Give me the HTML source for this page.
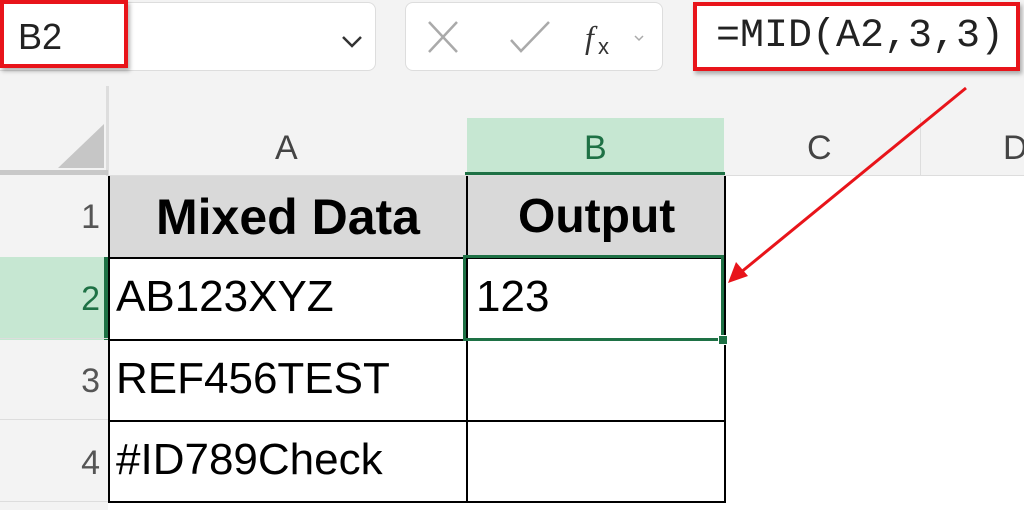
<!DOCTYPE html><html><head><style>
body{margin:0;width:1024px;height:510px;background:#fff;position:relative;overflow:hidden;font-family:"Liberation Sans",sans-serif}
div{position:absolute;box-sizing:border-box}
.t{font-size:44px;color:#000;line-height:1}
.rn{font-size:34px;color:#555;width:100px;text-align:right;left:0}
</style></head><body>
<div style="left:0;top:0;width:1024px;height:176px;background:#f3f3f3"></div>
<div style="left:0;top:176px;width:108px;height:334px;background:#f3f3f3"></div>
<div style="left:-10px;top:2px;width:386px;height:69px;background:#fff;border:1px solid #ddd;border-radius:8px"></div>
<div style="left:0;top:0;width:128px;height:68px;border:4px solid #e8141a;box-shadow:2px 3px 4px rgba(0,0,0,.3)"></div>
<div style="left:18px;top:16px;font-size:36px;color:#222">B2</div>
<svg style="position:absolute;left:340px;top:34px" width="24" height="16"><path d="M3 3 L12 12 L21 3" stroke="#333" stroke-width="2.5" fill="none"/></svg>
<div style="left:405px;top:2px;width:258px;height:69px;background:#fff;border:1px solid #ddd;border-radius:8px"></div>
<svg style="position:absolute;left:425px;top:18px" width="220" height="40"><path d="M4 4 L32 34 M32 4 L4 34" stroke="#aaa" stroke-width="2.5"/><path d="M86 22 L96 33 L124 4" stroke="#aaa" stroke-width="2.5" fill="none"/><text x="160" y="30" font-family="Liberation Serif" font-style="italic" font-size="32" fill="#333">f</text><text x="173" y="36" font-family="Liberation Sans" font-size="22" fill="#333">x</text><path d="M210 18 l4 4 l4-4" stroke="#aaa" stroke-width="1.5" fill="none"/></svg>
<div style="left:693px;top:2px;width:327px;height:69px;background:#fff;border:4px solid #e8141a;box-shadow:2px 3px 4px rgba(0,0,0,.3)"></div>
<div style="left:716px;top:14px;font-family:'Liberation Mono',monospace;font-size:40px;color:#222">=MID(A2,3,3)</div>
<div style="left:106px;top:86px;width:3px;height:90px;background:#ddd"></div>
<svg style="position:absolute;left:58px;top:124px" width="46" height="44"><path d="M46 0 L46 44 L0 44 Z" fill="#c6c6c6"/></svg>
<div style="left:0;top:170px;width:108px;height:5px;background:#c8c8c8"></div>
<div style="left:467px;top:118px;width:257px;height:58px;background:#c6e7d2"></div>
<div style="left:465px;top:172px;width:260px;height:4px;background:#1e7145"></div>
<div style="left:920px;top:118px;width:1px;height:58px;background:#ddd"></div>
<div style="left:108px;top:175px;width:916px;height:1px;background:#ddd"></div>
<div style="left:275px;top:129px;font-size:34px;color:#444">A</div>
<div style="left:584px;top:129px;font-size:34px;color:#1e7145">B</div>
<div style="left:807px;top:129px;font-size:34px;color:#444">C</div>
<div style="left:1003px;top:129px;font-size:34px;color:#444">D</div>
<div style="left:0;top:257px;width:108px;height:83px;background:#c6e7d2"></div>
<div style="left:104px;top:257px;width:4px;height:83px;background:#1e7145"></div>
<div style="left:0;top:338px;width:108px;height:1px;background:#ddd"></div>
<div style="left:0;top:419px;width:108px;height:1px;background:#ddd"></div>
<div style="left:0;top:501px;width:108px;height:1px;background:#ddd"></div>
<div class="rn" style="top:198px">1</div>
<div class="rn" style="top:280px;color:#1e7145">2</div>
<div class="rn" style="top:362px">3</div>
<div class="rn" style="top:444px">4</div>
<div style="left:108px;top:176px;width:617px;height:82px;background:#d9d9d9"></div>
<div style="left:108px;top:176px;width:618px;height:327px;border:2px solid #000;border-top:none"></div>
<div style="left:466px;top:176px;width:2px;height:326px;background:#000"></div>
<div style="left:108px;top:257px;width:617px;height:2px;background:#000"></div>
<div style="left:108px;top:339px;width:617px;height:2px;background:#000"></div>
<div style="left:108px;top:420px;width:617px;height:2px;background:#000"></div>
<div style="left:463px;top:255px;width:261px;height:86px;border:3px solid #1e7145"></div>
<div style="left:718px;top:335px;width:10px;height:10px;background:#1e7145;border:1px solid #fff"></div>
<div class="t" style="left:156px;top:192px;font-weight:bold;font-size:50px">Mixed Data</div>
<div class="t" style="left:518px;top:193px;font-weight:bold;font-size:48px">Output</div>
<div class="t" style="left:116px;top:275px">AB123XYZ</div>
<div class="t" style="left:476px;top:275px">123</div>
<div class="t" style="left:116px;top:357px">REF456TEST</div>
<div class="t" style="left:116px;top:438px">#ID789Check</div>
<svg style="position:absolute;left:0;top:0" width="1024" height="510"><line x1="966" y1="88" x2="740" y2="273" stroke="#e8141a" stroke-width="3"/><path d="M728 283 L736 262 L748 276 Z" fill="#e8141a"/></svg>
</body></html>
